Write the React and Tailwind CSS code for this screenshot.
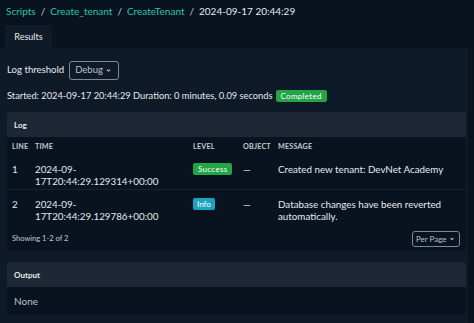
import React from "react";

const Chevron = ({ className = "" }) => (
  <svg viewBox="0 0 10 10" className={className} fill="none" stroke="currentColor" strokeWidth="1.3" strokeLinecap="round" strokeLinejoin="round">
    <path d="M3.5 4.3 L5 5.7 L6.5 4.3" />
  </svg>
);

const cols = "grid grid-cols-[23px_158px_50px_35px_1fr] pl-[5px]";

export default function App() {
  return (
    <div className="w-[474px] h-[323px] overflow-hidden bg-[#08131f] text-[#e6e9ee]" style={{ fontFamily: "Lato, 'Noto Sans', sans-serif" }}>
      <div className="h-[22px] flex items-center px-[6px] text-[10px] gap-[5px] pt-[1px]">
        <span className="text-[#2cc3ad]">Scripts</span>
        <span className="text-[#c9ced6]">/</span>
        <span className="text-[#2cc3ad]">Create_tenant</span>
        <span className="text-[#c9ced6]">/</span>
        <span className="text-[#2cc3ad]">CreateTenant</span>
        <span className="text-[#c9ced6]">/</span>
        <span className="text-[#e6e9ee]">2024-09-17 20:44:29</span>
      </div>
      <div className="h-[26px] flex items-end px-[5px]">
        <div className="h-[23px] w-[47px] bg-[#0e1a27] rounded-t-[2px] flex items-center justify-center text-[9px] text-[#e6e9ee]">Results</div>
      </div>
      <div className="bg-[#0e1a27] mr-[6px] h-[275px] pl-[7px] pr-[2px] pt-[13px]">
        <div className="flex items-center gap-[5px] h-[19px]">
          <span className="text-[9.6px]">Log threshold</span>
          <div className="h-[19px] w-[50px] border border-[#7d8896] rounded-[3px] flex items-center justify-between pl-[5px] pr-[5px] text-[9.5px] text-[#b9c0ca]">
            <span>Debug</span>
            <Chevron className="w-[9px] h-[9px]" />
          </div>
        </div>
        <div className="flex items-center gap-[3px] mt-[9px] h-[14px] text-[9.3px]">
          <span>Started: 2024-09-17 20:44:29 Duration: 0 minutes, 0.09 seconds</span>
          <span className="bg-[#22a447] text-white text-[8px] leading-[12px] px-[5px] rounded-[2px] tracking-[0.3px]">Completed</span>
        </div>
        <div className="mt-[9px] bg-[#08131f] rounded-[3px] overflow-hidden">
          <div className="h-[25px] bg-[#1d2735] flex items-center px-[7px] text-[8px] font-bold">Log</div>
          <div className={`${cols} text-[7.2px] text-[#c5cbd3] h-[20px] items-center uppercase tracking-[0.2px] font-bold`}>
            <span>Line</span><span>Time</span><span>Level</span><span>Object</span><span>Message</span>
          </div>
          <div className={`${cols} text-[9.8px] leading-[12px] pt-[5px] pb-[2px] border-b border-[#16212e]`}>
            <span className="pt-[1px]">1</span>
            <span className="pt-[1px]">2024-09-<br />17T20:44:29.129314+00:00</span>
            <span><span className="inline-block bg-[#22a447] text-white text-[8px] leading-[12px] px-[5px] rounded-[2px] tracking-[0.3px]">Success</span></span>
            <span className="pt-[1px]">—</span>
            <span className="pt-[1px]">Created new tenant: DevNet Academy</span>
          </div>
          <div className={`${cols} text-[9.8px] leading-[12px] pt-[7px] pb-[2px]`}>
            <span className="pt-[1px]">2</span>
            <span className="pt-[1px]">2024-09-<br />17T20:44:29.129786+00:00</span>
            <span><span className="inline-block bg-[#1ba3bf] text-white text-[8px] leading-[12px] px-[4px] rounded-[2px]">Info</span></span>
            <span className="pt-[1px]">—</span>
            <span className="pt-[1px]">Database changes have been reverted<br />automatically.</span>
          </div>
          <div className="flex items-center justify-between pl-[5px] pr-[6px] h-[27px] pt-[2px]">
            <span className="text-[7.5px] text-[#c5cbd3]">Showing 1-2 of 2</span>
            <div className="h-[16px] w-[48px] border border-[#7d8896] rounded-[3px] flex items-center justify-between pl-[3px] pr-[3px] text-[8px] text-[#b9c0ca]">
              <span>Per Page</span>
              <Chevron className="w-[8px] h-[8px]" />
            </div>
          </div>
        </div>
        <div className="mt-[11px] bg-[#08131f] rounded-[3px] overflow-hidden">
          <div className="h-[25px] bg-[#1d2735] flex items-center px-[7px] text-[8px] font-bold">Output</div>
          <div className="h-[27px] flex items-center px-[7px] pt-[2px] text-[10px] text-[#b9c0ca]">None</div>
        </div>
      </div>
    </div>
  );
}
